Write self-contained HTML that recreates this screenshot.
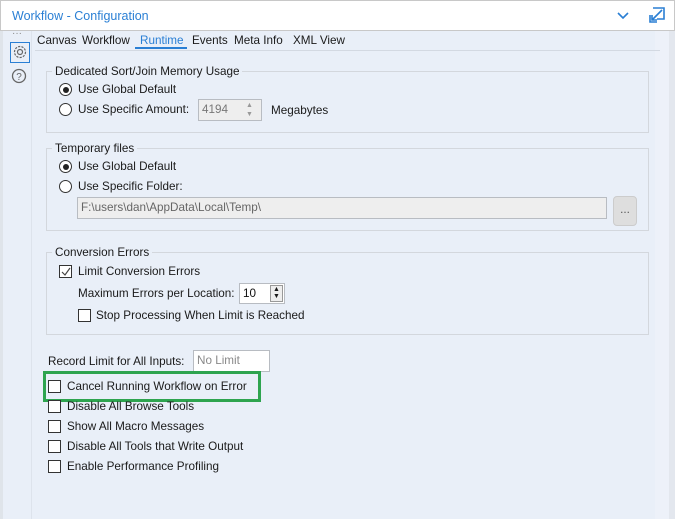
<!DOCTYPE html>
<html><head><style>
*{margin:0;padding:0;box-sizing:border-box}
body{width:675px;height:519px;overflow:hidden;background:#e9eff8;font-family:"Liberation Sans",sans-serif;font-size:11.7px;color:#1a1a1a;position:relative}
.a{position:absolute;white-space:nowrap}
.t{margin-top:1px}
.box{position:absolute;border:1px solid #d3d7dd}
.lg{position:absolute;background:#e9eff8;padding:0 3px;line-height:14px;margin-top:1px}
.rad{position:absolute;width:13px;height:13px;border:1px solid #333;border-radius:50%;background:#fff;margin-top:1px}
.rad.on::after{content:"";position:absolute;left:2.5px;top:2.5px;width:6px;height:6px;border-radius:50%;background:#222}
.cb{position:absolute;width:13px;height:13px;border:1px solid #333;background:#fff;margin-top:1px}
.inp{position:absolute;border:1px solid #b8bcc2;background:#fff;padding-left:3px;line-height:20px}
</style></head><body>
<div class="a" style="left:0;top:0;width:675px;height:31px;background:#fff;border:1px solid #c8c8c8"></div>
<div class="a" style="left:12px;top:9px;color:#2a7fd4;font-size:12.5px">Workflow - Configuration</div>
<svg class="a" style="left:616px;top:10px" width="14" height="10"><path d="M2 3 L7 8 L12 3" stroke="#2a7fd4" stroke-width="1.6" fill="none"/></svg>
<svg class="a" style="left:647px;top:5px" width="20" height="20"><path d="M6 3 H17 V14 H10 M3 10 V17 H10 M15 5 L5 15 M5 10 V15 H10" stroke="#2a7fd4" stroke-width="1.6" fill="none"/></svg>
<div class="a" style="left:0;top:31px;width:3px;height:488px;background:#dfe4ea"></div>
<div class="a" style="left:3px;top:31px;width:29px;height:488px;background:#e9eff8;border-right:1px solid #dde3ec"></div>
<div class="a" style="left:12px;top:28px;color:#888;font-size:10px">···</div>
<div class="a" style="left:10px;top:42px;width:20px;height:21px;border:1px solid #2a7fd4"></div>
<svg class="a" style="left:12px;top:44px" width="16" height="16"><circle cx="8" cy="8" r="2.5" stroke="#666" fill="none" stroke-width="1.2"/><circle cx="8" cy="8" r="5.5" stroke="#666" fill="none" stroke-width="1.2" stroke-dasharray="2.2 1.2"/></svg>
<svg class="a" style="left:11px;top:68px" width="16" height="16"><circle cx="8" cy="8" r="6.5" stroke="#666" fill="none" stroke-width="1.3"/><text x="8" y="12" font-size="10" text-anchor="middle" fill="#666" font-family="Liberation Sans">?</text></svg>
<div class="a" style="left:655px;top:31px;width:14px;height:488px;background:#edf1f9"></div>
<div class="a" style="left:669px;top:31px;width:6px;height:488px;background:#e3e7ee"></div>
<div class="a" style="left:37px;top:34px">Canvas</div>
<div class="a" style="left:82px;top:34px">Workflow</div>
<div class="a" style="left:140px;top:34px;color:#2a7fd4">Runtime</div>
<div class="a" style="left:135px;top:47px;width:52px;height:2px;background:#2a7fd4"></div>
<div class="a" style="left:192px;top:34px">Events</div>
<div class="a" style="left:234px;top:34px">Meta Info</div>
<div class="a" style="left:293px;top:34px">XML View</div>
<div class="a" style="left:35px;top:50px;width:625px;height:1px;background:#d3d9e2"></div>

<div class="box" style="left:46px;top:71px;width:603px;height:62px"></div>
<div class="lg" style="left:52px;top:64px">Dedicated Sort/Join Memory Usage</div>
<div class="rad on" style="left:59px;top:82px"></div><div class="a t" style="left:78px;top:82px">Use Global Default</div>
<div class="rad" style="left:59px;top:102px"></div><div class="a t" style="left:78px;top:102px">Use Specific Amount:</div>
<div class="inp" style="left:198px;top:99px;width:64px;height:22px;background:#eeeeee;color:#777">4194</div>
<div class="a" style="left:246px;top:101px;color:#999;font-size:7px;line-height:9px">▲<br>▼</div>
<div class="a t" style="left:271px;top:103px">Megabytes</div>

<div class="box" style="left:46px;top:148px;width:603px;height:83px"></div>
<div class="lg" style="left:52px;top:141px">Temporary files</div>
<div class="rad on" style="left:59px;top:159px"></div><div class="a t" style="left:78px;top:159px">Use Global Default</div>
<div class="rad" style="left:59px;top:179px"></div><div class="a t" style="left:78px;top:179px">Use Specific Folder:</div>
<div class="inp" style="left:77px;top:197px;width:530px;height:22px;background:#eeeeee;color:#666">F:\users\dan\AppData\Local\Temp\</div>
<div class="a" style="left:613px;top:196px;width:24px;height:30px;background:#dedede;border:1px solid #ccc;border-radius:4px;text-align:center;line-height:26px;color:#555">...</div>

<div class="box" style="left:46px;top:252px;width:603px;height:83px"></div>
<div class="lg" style="left:52px;top:245px">Conversion Errors</div>
<div class="cb" style="left:59px;top:264px"></div>
<svg class="a" style="left:60px;top:266px" width="12" height="12"><path d="M2 6 L5 9 L10 2" stroke="#444" stroke-width="1.2" fill="none"/></svg>
<div class="a t" style="left:78px;top:264px">Limit Conversion Errors</div>
<div class="a t" style="left:78px;top:286px">Maximum Errors per Location:</div>
<div class="inp" style="left:239px;top:283px;width:46px;height:21px;color:#111;line-height:19px">10</div>
<div class="a" style="left:270px;top:285px;width:13px;height:17px;background:#eee;border:1px solid #999;font-size:7px;line-height:7px;text-align:center">▲<br>▼</div>
<div class="cb" style="left:78px;top:308px"></div><div class="a t" style="left:96px;top:308px">Stop Processing When Limit is Reached</div>

<div class="a t" style="left:48px;top:354px">Record Limit for All Inputs:</div>
<div class="inp" style="left:193px;top:350px;width:77px;height:22px;color:#888">No Limit</div>
<div class="a" style="left:43px;top:371px;width:218px;height:31px;border:3px solid #2ea44f"></div>
<div class="cb" style="left:48px;top:379px"></div><div class="a t" style="left:67px;top:379px">Cancel Running Workflow on Error</div>
<div class="cb" style="left:48px;top:399px"></div><div class="a t" style="left:67px;top:399px">Disable All Browse Tools</div>
<div class="cb" style="left:48px;top:419px"></div><div class="a t" style="left:67px;top:419px">Show All Macro Messages</div>
<div class="cb" style="left:48px;top:439px"></div><div class="a t" style="left:67px;top:439px">Disable All Tools that Write Output</div>
<div class="cb" style="left:48px;top:459px"></div><div class="a t" style="left:67px;top:459px">Enable Performance Profiling</div>
</body></html>
